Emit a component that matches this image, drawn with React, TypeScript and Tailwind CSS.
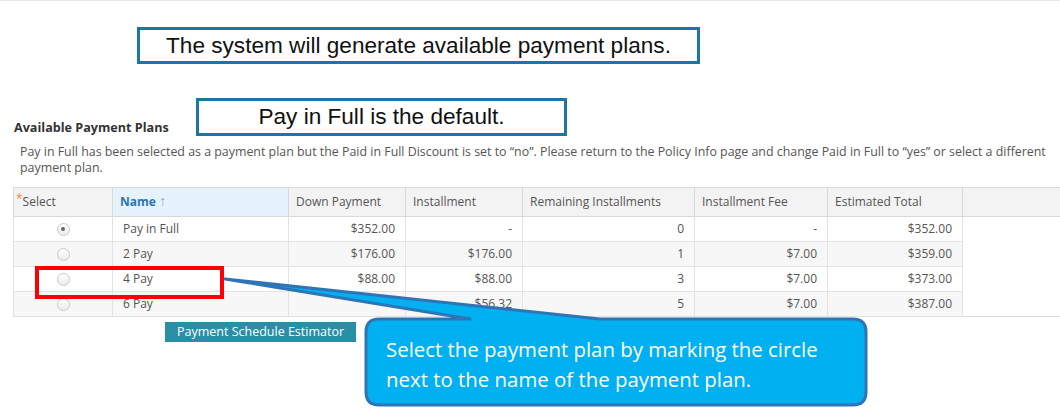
import React from "react";

type Plan = {
  name: string;
  down: string;
  installment: string;
  remaining: string;
  fee: string;
  total: string;
  selected?: boolean;
};

const plans: Plan[] = [
  { name: "Pay in Full", down: "$352.00", installment: "-", remaining: "0", fee: "-", total: "$352.00", selected: true },
  { name: "2 Pay", down: "$176.00", installment: "$176.00", remaining: "1", fee: "$7.00", total: "$359.00" },
  { name: "4 Pay", down: "$88.00", installment: "$88.00", remaining: "3", fee: "$7.00", total: "$373.00" },
  { name: "6 Pay", down: "", installment: "$56.32", remaining: "5", fee: "$7.00", total: "$387.00" },
];

function Radio({ checked }: { checked?: boolean }) {
  return (
    <span className="inline-flex h-[13px] w-[13px] items-center justify-center rounded-full border border-[#c9c9c9] bg-gradient-to-b from-white to-[#ececec] align-middle">
      {checked && <span className="h-[4px] w-[4px] rounded-full bg-[#666]" />}
    </span>
  );
}

export default function App() {
  const th = "h-[29px] border border-[#d9d9d9] px-[7px] text-left";
  const td = "h-[25px] border border-[#e3e3e3] px-[10px]";

  return (
    <div
      className="relative h-[409px] w-[1060px] overflow-hidden border-t border-[#e8e8e8] bg-white"
      style={{ fontFamily: '"Open Sans", "Liberation Sans", sans-serif' }}
    >
      {/* page content */}
      <div className="pl-[13px] pt-[118px]">
        <h2 className="ml-[1px] text-[12.6px] font-bold leading-[18px] text-[#333]">Available Payment Plans</h2>
        <p className="mt-[7px] pl-[7px] text-[12.4px] leading-[16px] text-[#555]">
          Pay in Full has been selected as a payment plan but the Paid in Full Discount is set to “no”. Please return to the Policy Info page and change Paid in Full to “yes” or select a different
          <br />
          payment plan.
        </p>

        <table className="mt-[11px] w-[1060px] table-fixed border-collapse text-[12px] text-[#555]">
          <colgroup>
            <col className="w-[99px]" />
            <col className="w-[176px]" />
            <col className="w-[117px]" />
            <col className="w-[117px]" />
            <col className="w-[172px]" />
            <col className="w-[133px]" />
            <col className="w-[135px]" />
            <col />
          </colgroup>
          <thead>
            <tr className="bg-[#f3f3f3]">
              <th className={th + " pl-[2px] font-normal"}>
                <span className="relative -top-[3px] text-[#f0883c]">*</span>Select
              </th>
              <th className={th + " bg-[#e7f3fc] font-bold text-[#2a75b3]"}>
                Name <span className="text-[15px] leading-none text-[#8fb4d6]">↑</span>
              </th>
              <th className={th + " font-normal"}>Down Payment</th>
              <th className={th + " font-normal"}>Installment</th>
              <th className={th + " font-normal"}>Remaining Installments</th>
              <th className={th + " font-normal"}>Installment Fee</th>
              <th className={th + " font-normal"}>Estimated Total</th>
              <th className={th} />
            </tr>
          </thead>
          <tbody>
            {plans.map((p, i) => (
              <tr key={p.name} className={i % 2 === 1 ? "bg-[#f7f7f7]" : "bg-white"}>
                <td className={td + " text-center leading-none"}>
                  <Radio checked={p.selected} />
                </td>
                <td className={td}>{p.name}</td>
                <td className={td + " text-right"}>{p.down}</td>
                <td className={td + " text-right"}>{p.installment}</td>
                <td className={td + " text-right"}>{p.remaining}</td>
                <td className={td + " text-right"}>{p.fee}</td>
                <td className={td + " text-right"}>{p.total}</td>
                <td className={"h-[25px] bg-white" + (i === plans.length - 1 ? " border-b border-[#d9d9d9]" : "")} />
              </tr>
            ))}
          </tbody>
        </table>

        <button className="ml-[152px] mt-[5px] h-[20px] w-[191px] bg-[#2a8ea6] text-[12.5px] leading-[20px] text-white">
          Payment Schedule Estimator
        </button>
      </div>

      {/* annotation layer */}
      <div
        className="absolute left-[137px] top-[26px] flex h-[37px] w-[563px] items-center justify-center border-[3px] border-[#1b76a4] bg-white text-[22.6px] text-[#111]"
        style={{ fontFamily: '"Liberation Sans", Arial, sans-serif' }}
      >
        The system will generate available payment plans.
      </div>
      <div
        className="absolute left-[196px] top-[97px] flex h-[38px] w-[371px] items-center justify-center border-[3px] border-[#1b76a4] bg-white text-[22.6px] text-[#111]"
        style={{ fontFamily: '"Liberation Sans", Arial, sans-serif' }}
      >
        Pay in Full is the default.
      </div>

      <div className="absolute left-[35px] top-[265px] h-[33px] w-[189px] border-[4px] border-[#ff0000]" />

      <svg className="pointer-events-none absolute left-0 top-0" width="1060" height="409">
        <path
          d="M 379 318 L 470 318 L 225 278 L 600 318 L 853 318 Q 866 318 866 331 L 866 391 Q 866 404 853 404 L 379 404 Q 366 404 366 391 L 366 331 Q 366 318 379 318 Z"
          fill="#00b0f0"
          stroke="#2f74b5"
          strokeWidth="3"
          strokeLinejoin="round"
        />
      </svg>
      <div className="absolute left-[386px] top-[333px] text-[20.4px] leading-[30px] text-white">
        Select the payment plan by marking the circle
        <br />
        next to the name of the payment plan.
      </div>
    </div>
  );
}
